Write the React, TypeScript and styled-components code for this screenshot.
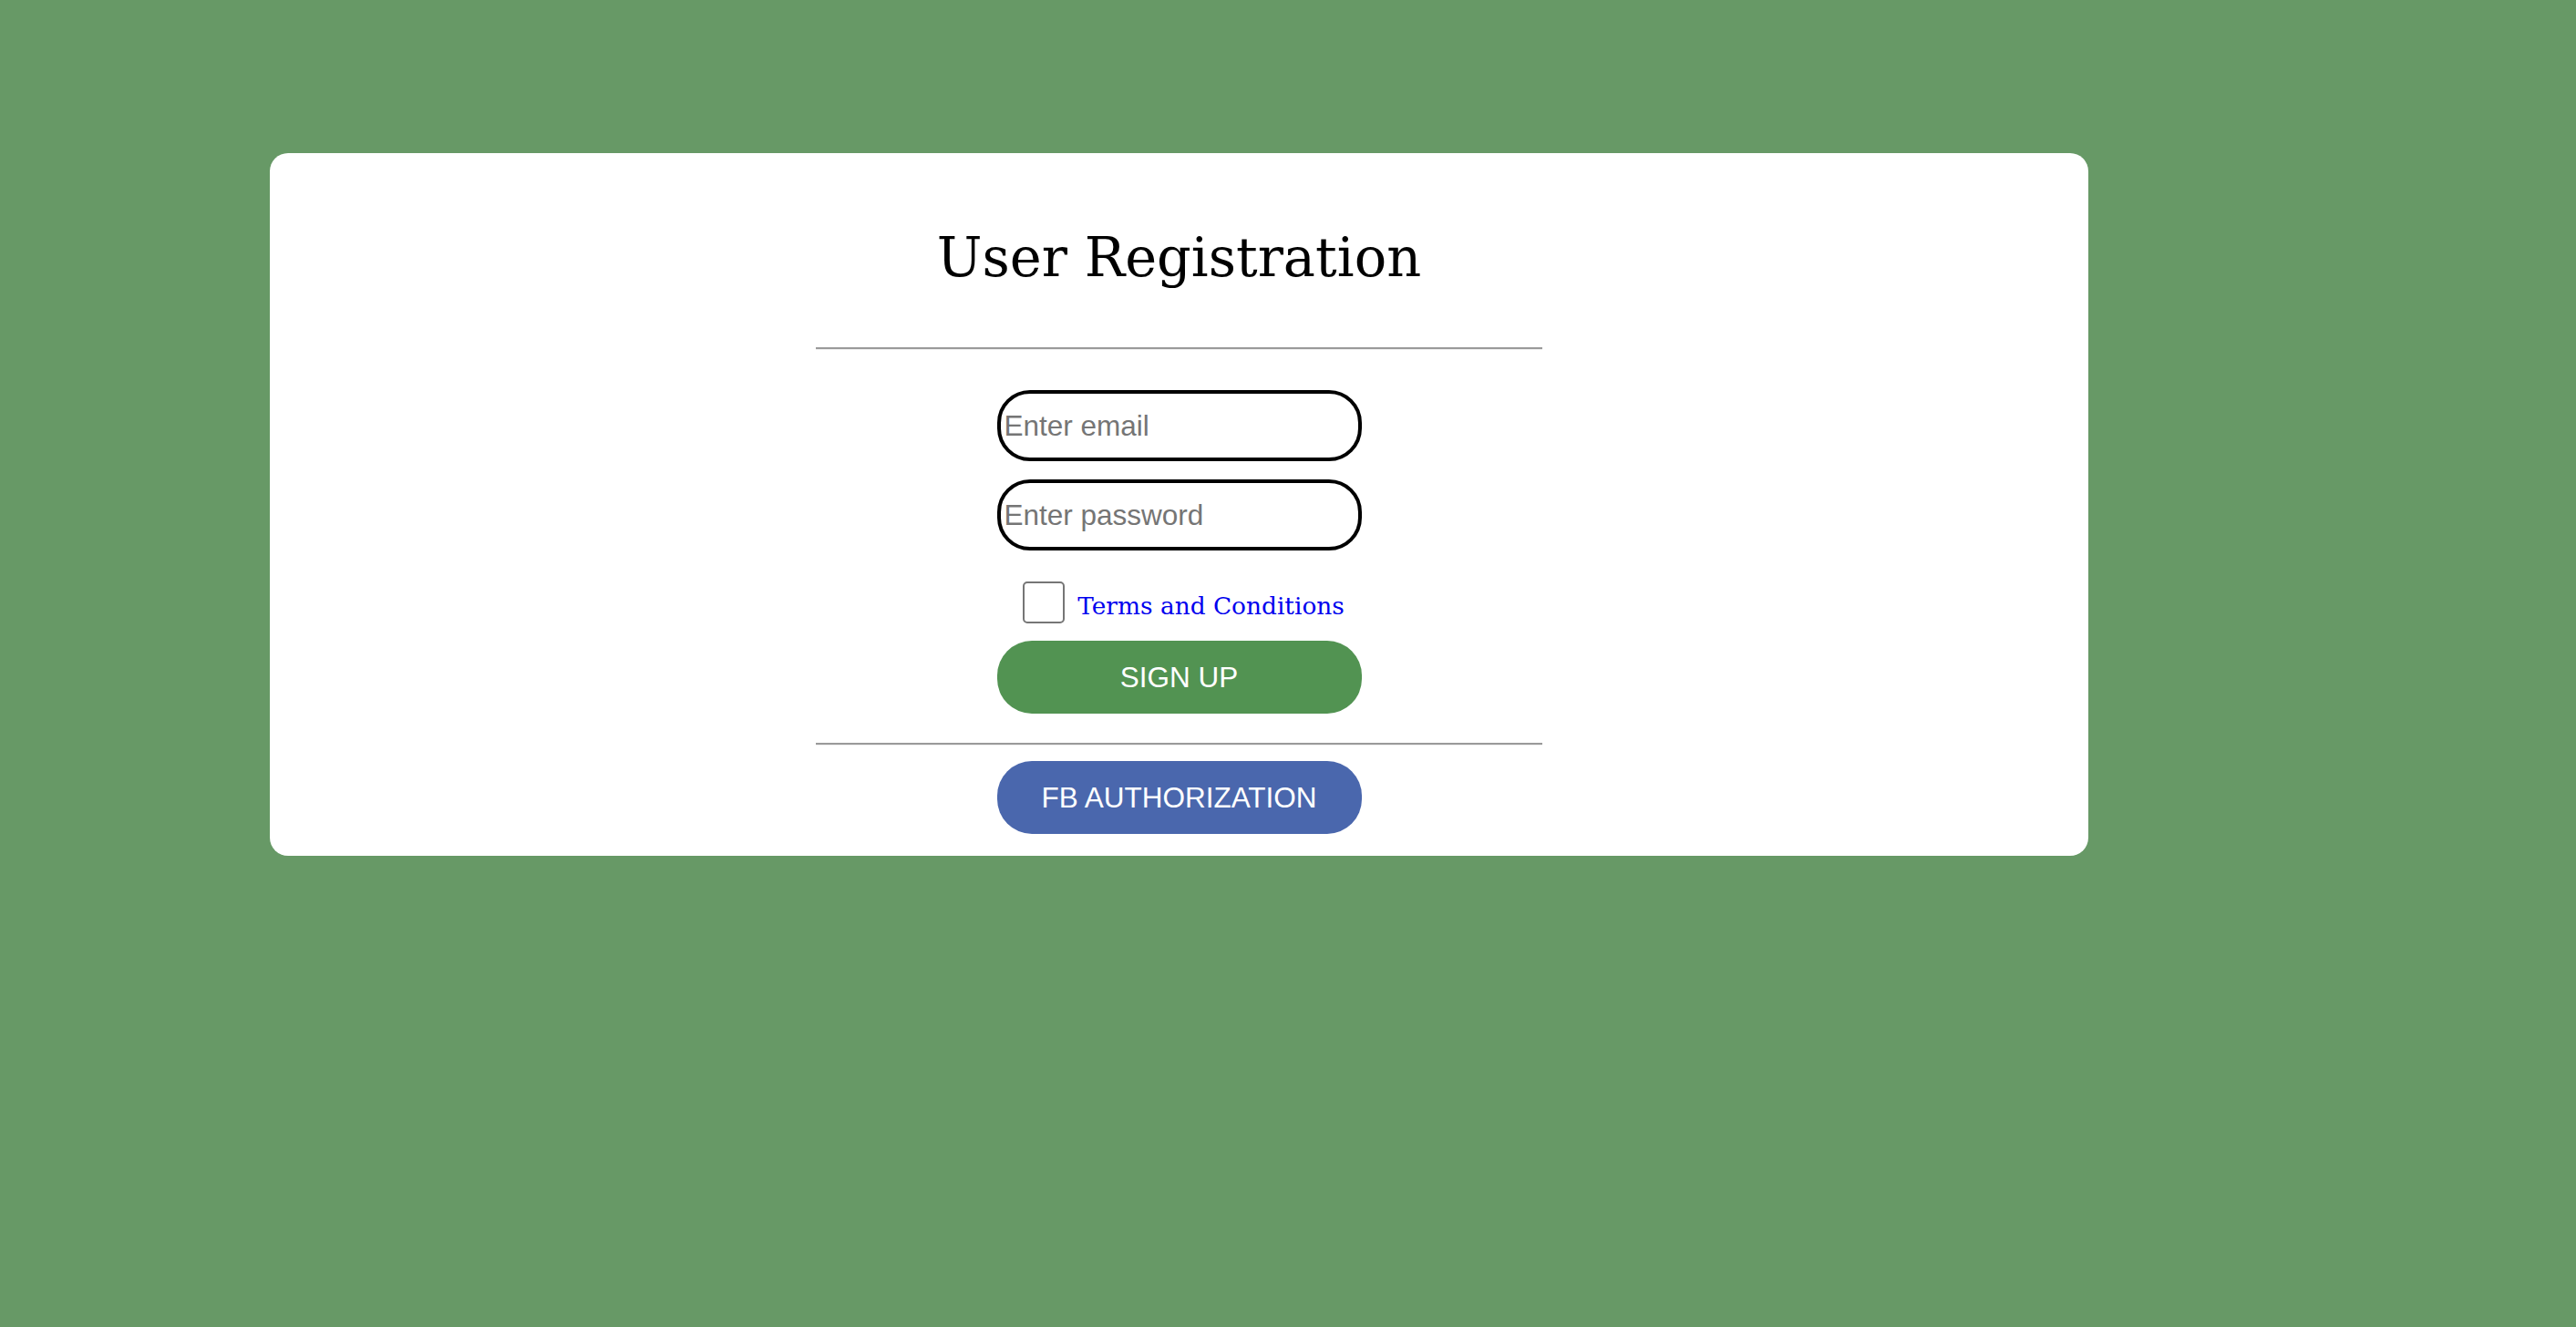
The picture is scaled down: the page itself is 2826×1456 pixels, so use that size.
import styled, { createGlobalStyle } from "styled-components";

const GlobalStyles = createGlobalStyle`
  * {
    box-sizing: border-box;
  }
  html, body {
    margin: 0;
    padding: 0;
  }
  body {
    background-color: #679966;
    min-height: 100vh;
    font-family: "DejaVu Serif", serif;
  }
`;

const Page = styled.main`
  padding-top: 168px;
  padding-left: 296px;
`;

const Card = styled.section`
  width: 1995px;
  background-color: #ffffff;
  border-radius: 20px;
  padding: 79px 0 24px;
  display: flex;
  flex-direction: column;
  align-items: center;
`;

const Title = styled.h1`
  margin: 0;
  font-family: "DejaVu Serif", serif;
  font-size: 59px;
  font-weight: 400;
  line-height: 71px;
  color: #000000;
`;

const Divider = styled.hr<{ $top: number; $bottom: number }>`
  width: 797px;
  margin: ${(p) => p.$top}px 0 ${(p) => p.$bottom}px;
  border: none;
  border-top: 2px solid #9a9a9a;
  border-bottom: 1px solid #eeeeee;
`;

const Form = styled.form`
  display: flex;
  flex-direction: column;
  align-items: center;
`;

const Input = styled.input`
  width: 400px;
  height: 78px;
  margin-bottom: 20px;
  padding: 0 4px;
  border: 4px solid #000000;
  border-radius: 36px;
  background: #ffffff;
  font-family: "Liberation Sans", Arial, sans-serif;
  font-size: 31.5px;
  color: #000000;
  outline: none;

  &::placeholder {
    color: #757575;
  }
`;

const TermsRow = styled.label`
  display: flex;
  align-items: center;
  gap: 14px;
  margin: 14px 0 0 10px;
  cursor: pointer;
`;

const Checkbox = styled.input`
  appearance: none;
  margin: 0;
  width: 46px;
  height: 46px;
  border: 2px solid #767676;
  border-radius: 5px;
  background: #ffffff;
`;

const TermsLink = styled.a`
  padding-top: 8px;
  font-family: "DejaVu Serif", serif;
  font-size: 26.4px;
  line-height: 30px;
  color: #0000ee;
  text-decoration: none;
`;

const Button = styled.button<{ $color: string }>`
  width: 400px;
  height: 80px;
  border: none;
  border-radius: 38px;
  background-color: ${(p) => p.$color};
  color: #ffffff;
  font-family: "Liberation Sans", Arial, sans-serif;
  font-size: 31.5px;
  cursor: pointer;
`;

const SignUp = styled(Button)`
  margin-top: 19px;
`;

function App() {
  return (
    <>
      <GlobalStyles />
      <Page>
        <Card>
          <Title>User Registration</Title>
          <Divider $top={63} $bottom={44} />
          <Form onSubmit={(e) => e.preventDefault()}>
            <Input type="email" placeholder="Enter email" />
            <Input type="password" placeholder="Enter password" />
            <TermsRow>
              <Checkbox type="checkbox" />
              <TermsLink href="#">Terms and Conditions</TermsLink>
            </TermsRow>
            <SignUp type="submit" $color="#529352">
              SIGN UP
            </SignUp>
          </Form>
          <Divider $top={32} $bottom={17} />
          <Button type="button" $color="#4a67ad">
            FB AUTHORIZATION
          </Button>
        </Card>
      </Page>
    </>
  );
}

export default App;
